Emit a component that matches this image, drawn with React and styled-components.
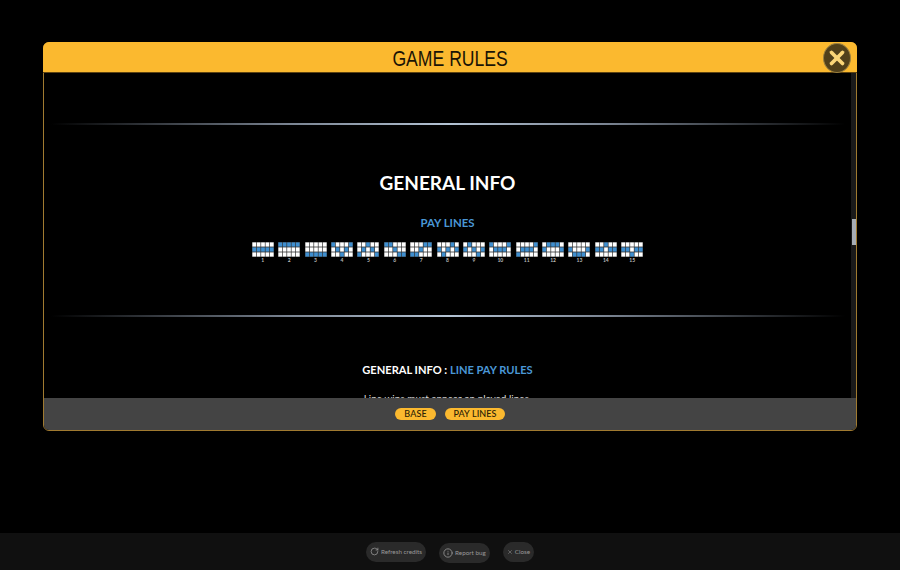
import React from 'react';
import styled, { createGlobalStyle } from 'styled-components';
import { RotateCw, Info, X } from 'lucide-react';

const PAY_LINES = [
    [1, 1, 1, 1, 1],
    [0, 0, 0, 0, 0],
    [2, 2, 2, 2, 2],
    [0, 1, 2, 1, 0],
    [2, 1, 0, 1, 2],
    [0, 0, 1, 2, 2],
    [2, 2, 1, 0, 0],
    [1, 2, 1, 0, 1],
    [1, 0, 1, 2, 1],
    [0, 1, 1, 1, 0],
    [2, 1, 1, 1, 0],
    [1, 0, 0, 0, 1],
    [1, 2, 2, 2, 1],
    [1, 1, 0, 1, 1],
    [1, 1, 2, 1, 1],
];

const ROWS = [0, 1, 2];

// little 5x3 reel diagram, drawn so the cells can sit on fractions of a pixel
const PayLine = ({ line }) => (
    <svg width="22" height="15" viewBox="0 0 22 15">
        <rect width="22" height="15" fill="#333" />
        {ROWS.map(row => line.map((active, col) => (
            <rect
                key={`${row}-${col}`}
                x={col * 4.4 + 0.35}
                y={row * 5 + 0.4}
                width="3.7"
                height="4.2"
                fill={active === row ? '#3f8fd0' : '#fff'}
            />
        )))}
    </svg>
);

const App = () => {
    return (
        <Page>
            <GlobalStyle />
            <Stage>
                <Modal>
                    <ModalHeader>
                        <Title>GAME RULES</Title>
                        <CloseButton aria-label="Close">
                            <X size={22} strokeWidth={4} color="#fbd678" />
                        </CloseButton>
                    </ModalHeader>
                    <ModalBody>
                        <Scroll>
                            <Divider />
                            <Heading>GENERAL INFO</Heading>
                            <SubHeading>PAY LINES</SubHeading>
                            <LineList>
                                {PAY_LINES.map((line, i) => (
                                    <LineItem key={i}>
                                        <PayLine line={line} />
                                        <LineNumber>{i + 1}</LineNumber>
                                    </LineItem>
                                ))}
                            </LineList>
                            <LowerDivider />
                            <RuleHeading>GENERAL INFO : <Highlight>LINE PAY RULES</Highlight></RuleHeading>
                            <Paragraph>Line wins must appear on played lines.</Paragraph>
                        </Scroll>
                        <ScrollTrack>
                            <ScrollThumb />
                        </ScrollTrack>
                    </ModalBody>
                    <ModalFooter>
                        <Tab>BASE</Tab>
                        <Tab $wide>PAY LINES</Tab>
                    </ModalFooter>
                </Modal>
            </Stage>
            <BottomBar>
                <BarButton><RotateCw size={9} />Refresh credits</BarButton>
                <BarButton $low><Info size={10} />Report bug</BarButton>
                <BarButton><X size={6} />Close</BarButton>
            </BottomBar>
        </Page>
    )
}

export default App;

const GlobalStyle = createGlobalStyle`
    html, body {
        margin: 0;
        height: 100%;
        background: #000;
    }
`;

const Page = styled.div`
    width: 900px;
    height: 570px;
    display: flex;
    flex-direction: column;
    overflow: hidden;
    background: #000;
    font-family: Lato, "Open Sans", sans-serif;
`;

const Stage = styled.div`
    flex: 1;
    padding: 42px 43px 0;
`;

const Modal = styled.div`
    width: 814px;
    height: 389px;
    box-sizing: border-box;
    display: flex;
    flex-direction: column;
    border: 1px solid #a07a30;
    border-radius: 6px;
    background: #000;
`;

const ModalHeader = styled.div`
    position: relative;
    height: 30px;
    margin: -1px -1px 0;
    flex-shrink: 0;
    display: flex;
    align-items: center;
    justify-content: center;
    background: #fbb92f;
    border-radius: 6px 6px 0 0;
    box-shadow: 0 1px 0 #5d4312;
`;

const Title = styled.h1`
    margin: 3px 0 0;
    color: #1a1405;
    font: 400 22px "Liberation Sans", sans-serif;
    transform: scaleX(0.8);
`;

const CloseButton = styled.button`
    position: absolute;
    top: 1px;
    right: 6px;
    width: 28px;
    height: 30px;
    box-sizing: border-box;
    padding: 0;
    display: flex;
    align-items: center;
    justify-content: center;
    border: 1px solid #9c8140;
    border-radius: 50%;
    background: #51401a;
`;

const ModalBody = styled.div`
    flex: 1;
    min-height: 0;
    display: flex;
`;

const Scroll = styled.div`
    flex: 1;
    min-width: 0;
    overflow: hidden;
    display: flex;
    flex-direction: column;
    align-items: center;
    padding-top: 51px;
    box-sizing: border-box;
`;

const ScrollTrack = styled.div`
    width: 5px;
    flex-shrink: 0;
    background: #1a1a1a;
`;

const ScrollThumb = styled.div`
    width: 4px;
    height: 26px;
    margin: 147px 0 0 1px;
    background: #a6adb5;
`;

const Divider = styled.div`
    width: 794px;
    height: 2px;
    flex-shrink: 0;
    background: linear-gradient(90deg, transparent, #7a8492 30%, #b4c3d4 50%, #7a8492 70%, transparent);
`;

const LowerDivider = styled(Divider)`
    margin-top: 52px;
`;

const Heading = styled.h2`
    margin: 46px 0 0;
    color: #fff;
    font-size: 19px;
    line-height: 24px;
    font-weight: 700;
`;

const SubHeading = styled.h3`
    margin: 20px 0 0;
    color: #4a97d6;
    font-size: 11.4px;
    line-height: 15px;
    font-weight: 700;
`;

const LineList = styled.div`
    display: flex;
    gap: 4.4px;
    margin-top: 12px;
`;

const LineItem = styled.div`
    width: 22px;
    display: flex;
    flex-direction: column;
    align-items: center;
`;

const LineNumber = styled.span`
    margin-top: 1px;
    color: #bbb;
    font-size: 5px;
    line-height: 5px;
    font-weight: 700;
`;

const RuleHeading = styled.h3`
    margin: 45px 0 0;
    color: #fff;
    font-size: 11.1px;
    line-height: 15px;
    font-weight: 700;
`;

const Highlight = styled.span`
    color: #4a97d6;
`;

const Paragraph = styled.p`
    margin: 14px 0 0;
    color: #ddd;
    font-size: 10px;
    line-height: 14px;
    white-space: nowrap;
`;

const ModalFooter = styled.div`
    height: 32px;
    flex-shrink: 0;
    display: flex;
    align-items: center;
    justify-content: center;
    gap: 9px;
    background: #444;
    border-radius: 0 0 5px 5px;
`;

const Tab = styled.button`
    width: ${props => props.$wide ? '60px' : '41px'};
    height: 12px;
    padding: 0;
    border: 0;
    border-radius: 6px;
    background: #fbb92f;
    color: #2a2106;
    font: 500 9px/12px Lato, sans-serif;
    letter-spacing: 0.1px;
`;

const BottomBar = styled.div`
    height: 37px;
    flex-shrink: 0;
    display: flex;
    align-items: center;
    justify-content: center;
    gap: 13px;
    background: #101010;
`;

const BarButton = styled.button`
    height: 20px;
    margin-top: ${props => props.$low ? '2px' : '0'};
    padding: 0 4px;
    display: flex;
    align-items: center;
    gap: 2px;
    border: 0;
    border-radius: 10px;
    background: #2a2a2a;
    color: #999;
    font: 400 6.3px Lato, sans-serif;
`;
